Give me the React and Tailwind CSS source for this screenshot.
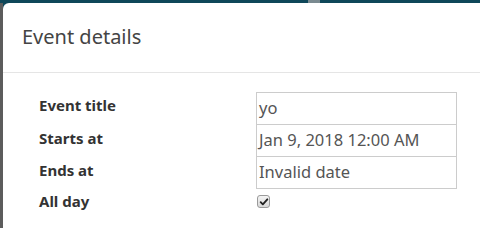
export default function App() {
  const font = { fontFamily: '"Noto Sans", "Open Sans", sans-serif' };
  return (
    <div className="w-[480px] h-[228px] overflow-hidden bg-[#5c5c5c] flex flex-col" style={font}>
      <div className="h-[3px] bg-[#0f4759] relative shrink-0">
        <div className="absolute left-[308px] top-0 w-[12px] h-[3px] bg-[#7a8a90]" />
      </div>
      <div className="flex-1 flex bg-[#0f4759]">
        <div className="w-[3px] bg-[#5c5c5c]" />
        <div className="flex-1 bg-white rounded-tl-[6px] flex flex-col">
          <div className="h-[70px] border-b border-[#e5e5e5] flex items-center pl-[19px]">
            <h4 className="text-[20px] text-[#444] leading-none -mt-[2px]">Event details</h4>
          </div>
          <div className="pl-[36px] pt-[19px] grid grid-cols-[217px_201px] text-[15px]">
            <div className="h-[33px] pb-[7px] flex items-center font-bold text-[#333]">Event title</div>
            <div className="h-[33px] border border-[#ccc] flex items-center px-[2px] text-[16.5px] text-[#555]">yo</div>
            <div className="h-[32px] pb-[6px] flex items-center font-bold text-[#333]">Starts at</div>
            <div className="h-[33px] -mt-[1px] border border-[#ccc] flex items-center px-[2px] text-[16.5px] text-[#555]">Jan 9, 2018 12:00 AM</div>
            <div className="h-[32px] pb-[6px] flex items-center font-bold text-[#333]">Ends at</div>
            <div className="h-[33px] -mt-[1px] border border-[#ccc] flex items-center px-[2px] text-[16.5px] text-[#555]">Invalid date</div>
            <div className="h-[28px] pb-[3px] flex items-center font-bold text-[#333]">All day</div>
            <div className="h-[28px] pb-[3px] flex items-center pl-[1px]">
              <span className="w-[13px] h-[13px] rounded-[3px] border border-[#9a9a9a] bg-gradient-to-b from-[#f4f4f4] to-[#d8d8d8] flex items-center justify-center">
                <svg viewBox="0 0 12 12" className="w-[10px] h-[10px]">
                  <path d="M2 6.2 L4.6 8.8 L10 2.8" fill="none" stroke="#222" strokeWidth="2.2" strokeLinecap="round" strokeLinejoin="round" />
                </svg>
              </span>
            </div>
          </div>
        </div>
      </div>
    </div>
  );
}
